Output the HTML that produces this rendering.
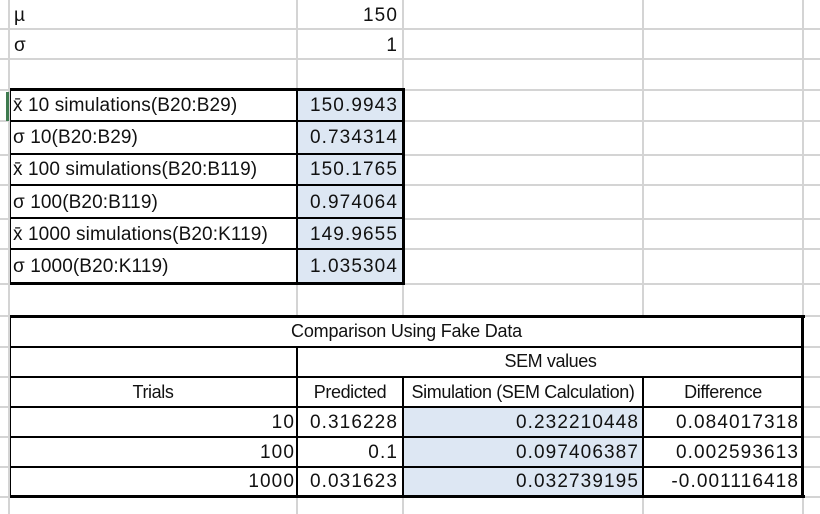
<!DOCTYPE html>
<html><head><meta charset="utf-8"><style>
body{margin:0;width:820px;height:514px;position:relative;overflow:hidden;background:#fff;font-family:"Liberation Sans",sans-serif;color:#111}
.g{position:absolute;background:#d4d4d4}
.k{position:absolute;background:#000}
.f{position:absolute;background:#dde7f3}
.t{position:absolute;white-space:nowrap;font-size:19px;line-height:22px;letter-spacing:0.1px}
.n{position:absolute;white-space:nowrap;font-size:19px;line-height:22px;letter-spacing:1.1px;text-align:right}
.h{position:absolute;white-space:nowrap;font-size:18px;line-height:22px;letter-spacing:-0.4px;text-align:center}
</style></head><body>
<div class="g" style="left:8px;top:0;width:2px;height:514px"></div>
<div class="g" style="left:296px;top:0;width:2px;height:514px"></div>
<div class="g" style="left:402px;top:0;width:2px;height:514px"></div>
<div class="g" style="left:642px;top:0;width:2px;height:514px"></div>
<div class="g" style="left:802px;top:0;width:2px;height:514px"></div>
<div class="g" style="left:0;top:28px;width:820px;height:2px"></div>
<div class="g" style="left:0;top:58px;width:820px;height:2px"></div>
<div class="g" style="left:0;top:89px;width:820px;height:2px"></div>
<div class="g" style="left:0;top:120px;width:820px;height:2px"></div>
<div class="g" style="left:0;top:154px;width:820px;height:2px"></div>
<div class="g" style="left:0;top:184px;width:820px;height:2px"></div>
<div class="g" style="left:0;top:218px;width:820px;height:2px"></div>
<div class="g" style="left:0;top:248px;width:820px;height:2px"></div>
<div class="g" style="left:0;top:283px;width:820px;height:2px"></div>
<div class="g" style="left:0;top:315px;width:820px;height:2px"></div>
<div class="g" style="left:0;top:346px;width:820px;height:2px"></div>
<div class="g" style="left:0;top:376px;width:820px;height:2px"></div>
<div class="g" style="left:0;top:406px;width:820px;height:2px"></div>
<div class="g" style="left:0;top:436px;width:820px;height:2px"></div>
<div class="g" style="left:0;top:466px;width:820px;height:2px"></div>
<div class="g" style="left:0;top:496px;width:820px;height:2px"></div>

<div class="t" style="left:14px;top:5px">µ</div>
<div class="n" style="left:300px;width:98px;top:5px">150</div>
<div class="t" style="left:14px;top:35px">σ</div>
<div class="n" style="left:300px;width:98px;top:35px">1</div>

<div style="position:absolute;left:10px;top:89px;width:393px;height:195px;background:#fff"></div>
<div class="f" style="left:298px;top:91px;width:104px;height:192px"></div>
<div class="k" style="left:10px;top:88px;width:395px;height:3px"></div>
<div class="k" style="left:10px;top:282px;width:395px;height:3px"></div>
<div class="k" style="left:10px;top:88px;width:1px;height:197px"></div>
<div class="k" style="left:402px;top:88px;width:3px;height:197px"></div>
<div class="k" style="left:296px;top:88px;width:2px;height:197px"></div>
<div class="k" style="left:10px;top:120px;width:393px;height:2px"></div>
<div class="k" style="left:10px;top:153px;width:393px;height:2px"></div>
<div class="k" style="left:10px;top:184px;width:393px;height:2px"></div>
<div class="k" style="left:10px;top:217px;width:393px;height:2px"></div>
<div class="k" style="left:10px;top:248px;width:393px;height:2px"></div>
<div style="position:absolute;left:6px;top:92px;width:3px;height:29px;background:#3e7a4f"></div>

<div class="t" style="left:13px;top:95px">x̄ 10 simulations(B20:B29)</div>
<div class="t" style="left:13px;top:127px">σ 10(B20:B29)</div>
<div class="t" style="left:13px;top:159px">x̄ 100 simulations(B20:B119)</div>
<div class="t" style="left:13px;top:192px">σ 100(B20:B119)</div>
<div class="t" style="left:13px;top:224px">x̄ 1000 simulations(B20:K119)</div>
<div class="t" style="left:13px;top:256px">σ 1000(B20:K119)</div>
<div class="n" style="left:300px;width:98px;top:95px">150.9943</div>
<div class="n" style="left:300px;width:98px;top:127px">0.734314</div>
<div class="n" style="left:300px;width:98px;top:159px">150.1765</div>
<div class="n" style="left:300px;width:98px;top:192px">0.974064</div>
<div class="n" style="left:300px;width:98px;top:224px">149.9655</div>
<div class="n" style="left:300px;width:98px;top:256px">1.035304</div>

<div style="position:absolute;left:10px;top:316px;width:793px;height:181px;background:#fff"></div>
<div class="f" style="left:404px;top:408px;width:238px;height:88px"></div>
<div class="k" style="left:10px;top:315px;width:795px;height:3px"></div>
<div class="k" style="left:10px;top:495px;width:795px;height:3px"></div>
<div class="k" style="left:10px;top:315px;width:1px;height:183px"></div>
<div class="k" style="left:801px;top:315px;width:3px;height:183px"></div>
<div class="k" style="left:10px;top:346px;width:793px;height:2px"></div>
<div class="k" style="left:10px;top:376px;width:793px;height:2px"></div>
<div class="k" style="left:10px;top:406px;width:793px;height:2px"></div>
<div class="k" style="left:10px;top:436px;width:793px;height:2px"></div>
<div class="k" style="left:10px;top:466px;width:793px;height:2px"></div>
<div class="k" style="left:296px;top:346px;width:2px;height:150px"></div>
<div class="k" style="left:402px;top:376px;width:2px;height:120px"></div>
<div class="k" style="left:642px;top:376px;width:2px;height:120px"></div>

<div class="h" style="left:10px;width:793px;top:320px;letter-spacing:-0.2px">Comparison Using Fake Data</div>
<div class="h" style="left:298px;width:505px;top:350px">SEM values</div>
<div class="h" style="left:10px;width:286px;top:381px">Trials</div>
<div class="h" style="left:298px;width:104px;top:381px">Predicted</div>
<div class="h" style="left:404px;width:238px;top:381px">Simulation (SEM Calculation)</div>
<div class="h" style="left:644px;width:158px;top:381px">Difference</div>

<div class="n" style="left:200px;width:95px;top:412px">10</div>
<div class="n" style="left:200px;width:95px;top:442px">100</div>
<div class="n" style="left:200px;width:95px;top:471px">1000</div>
<div class="n" style="left:300px;width:98px;top:412px">0.316228</div>
<div class="n" style="left:300px;width:98px;top:442px">0.1</div>
<div class="n" style="left:300px;width:98px;top:471px">0.031623</div>
<div class="n" style="left:404px;width:235px;top:412px">0.232210448</div>
<div class="n" style="left:404px;width:235px;top:442px">0.097406387</div>
<div class="n" style="left:404px;width:235px;top:471px">0.032739195</div>
<div class="n" style="left:644px;width:155px;top:412px">0.084017318</div>
<div class="n" style="left:644px;width:155px;top:442px">0.002593613</div>
<div class="n" style="left:644px;width:155px;top:471px">-0.001116418</div>
</body></html>
